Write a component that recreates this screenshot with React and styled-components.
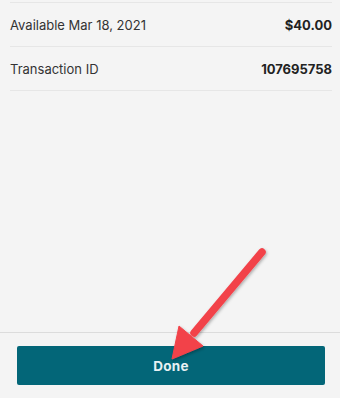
import React from "react";
import styled, { createGlobalStyle } from "styled-components";

const GlobalStyle = createGlobalStyle`
  html, body {
    margin: 0;
    padding: 0;
    background: #f4f4f4;
  }
  body {
    font-family: "Inter", "Liberation Sans", sans-serif;
    color: #2b2b2b;
  }
`;

const Page = styled.div`
  position: relative;
  width: 340px;
  height: 398px;
  display: flex;
  flex-direction: column;
  background: #f4f4f4;
  overflow: hidden;
`;

const List = styled.div`
  margin: 2px 8px 0 10px;
  border-top: 1px solid #e6e6e6;
`;

const Row = styled.div`
  display: flex;
  align-items: center;
  justify-content: space-between;
  height: 43px;
  padding-top: 1px;
  box-sizing: border-box;
  border-bottom: 1px solid #e6e6e6;
  font-size: 13px;
  height: 44px;
`;

const Label = styled.span`
  color: #333;
`;

const Value = styled.span`
  font-weight: 700;
  color: #222;
`;

const Spacer = styled.div`
  flex: 1;
`;

const Footer = styled.div`
  border-top: 1px solid #dcdcdc;
  padding: 13px 15px 13px 17px;
`;

const DoneButton = styled.button`
  display: block;
  width: 100%;
  height: 39px;
  border: none;
  border-radius: 2px;
  background: #036678;
  color: #e8f1f3;
  font-family: inherit;
  font-size: 13.5px;
  font-weight: 700;
  letter-spacing: 0.2px;
  cursor: pointer;
`;

const Arrow = styled.svg`
  position: absolute;
  left: 0;
  top: 0;
  pointer-events: none;
`;

const rows = [
  { label: "Available Mar 18, 2021", value: "$40.00" },
  { label: "Transaction ID", value: "107695758" },
];

export default function App() {
  return (
    <>
      <GlobalStyle />
      <Page>
        <List>
          {rows.map((r) => (
            <Row key={r.label}>
              <Label>{r.label}</Label>
              <Value>{r.value}</Value>
            </Row>
          ))}
        </List>
        <Spacer />
        <Footer>
          <DoneButton>Done</DoneButton>
        </Footer>
        <Arrow width="340" height="398" viewBox="0 0 340 398">
          <defs>
            <filter id="sh" x="-20%" y="-20%" width="140%" height="140%">
              <feDropShadow dx="1" dy="1.5" stdDeviation="1.5" floodColor="#000" floodOpacity="0.3" />
            </filter>
          </defs>
          <g filter="url(#sh)" fill="#f2424a" stroke="#f2424a">
            <line x1="262" y1="252" x2="194" y2="333" strokeWidth="7.5" strokeLinecap="round" />
            <polygon points="172,359 179,326 203,346" strokeWidth="1" strokeLinejoin="round" />
          </g>
        </Arrow>
      </Page>
    </>
  );
}
